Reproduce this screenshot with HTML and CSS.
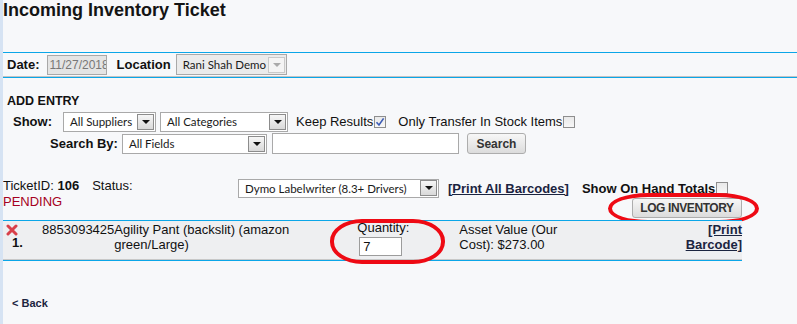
FILE: index.html
```html
<!DOCTYPE html>
<html>
   <head>
      <title>Incoming Inventory Ticket</title>
      <link rel="stylesheet" href="styles.css">
   </head>
   <body>
      <div class="page">
         <h1>Incoming Inventory Ticket</h1>
         <div class="ticket-head">
            <span class="field-label">Date:</span>
            <span class="date-input">11/27/2018</span>
            <span class="field-label location-label">Location</span>
            <div class="dropdown dropdown-location is-disabled">
               <span class="dropdown-text">Rani Shah Demo</span>
               <span class="dropdown-arrow"></span>
            </div>
         </div>
         <div class="add-entry">
            <div class="section-title">ADD ENTRY</div>
            <div class="filter-row show-row">
               <span class="field-label">Show:</span>
               <div class="dropdown dropdown-suppliers">
                  <span class="dropdown-text">All Suppliers</span>
                  <span class="dropdown-arrow"></span>
               </div>
               <div class="dropdown dropdown-categories">
                  <span class="dropdown-text">All Categories</span>
                  <span class="dropdown-arrow"></span>
               </div>
               <span class="check-label keep-label">Keep Results</span>
               <span class="checkbox checked">
                  <svg width="10" height="10" viewBox="0 0 10 10"><path d="M1.5 5.2 L4 8 L8.6 1.4" fill="none" stroke="#3b5bb5" stroke-width="1.6"/></svg>
               </span>
               <span class="check-label transfer-label">Only Transfer In Stock Items</span>
               <span class="checkbox"></span>
            </div>
            <div class="filter-row search-row">
               <span class="field-label">Search By:</span>
               <div class="dropdown dropdown-fields">
                  <span class="dropdown-text">All Fields</span>
                  <span class="dropdown-arrow"></span>
               </div>
               <span class="text-input"></span>
               <button class="btn search-btn">Search</button>
            </div>
         </div>
         <div class="ticket-bar">
            <div class="ticket-info">TicketID: <b>106</b><span class="status-label">Status:</span> <span class="pending">PENDING</span></div>
            <div class="ticket-actions">
               <div class="actions-top">
                  <div class="dropdown dropdown-printer">
                     <span class="dropdown-text">Dymo Labelwriter (8.3+ Drivers)</span>
                     <span class="dropdown-arrow"></span>
                  </div>
                  <a class="print-all" href="#">[Print All Barcodes]</a>
                  <span class="field-label hand-label">Show On Hand Totals</span>
                  <span class="checkbox"></span>
               </div>
               <div class="actions-bottom">
                  <span class="marked">
                     <button class="btn log-btn">LOG INVENTORY</button>
                     <span class="ring ring-log"></span>
                  </span>
               </div>
            </div>
         </div>
         <div class="item-row">
            <div class="item-num">
               <svg class="remove-icon" width="12" height="12" viewBox="0 0 12 12"><path d="M2 2 L10 10 M10 2 L2 10" stroke="#d8404a" stroke-width="3" stroke-linecap="round"/></svg>
               <div class="num">1.</div>
            </div>
            <div class="item-code">8853093425</div>
            <div class="item-name">Agility Pant (backslit) (amazon green/Large)</div>
            <div class="item-qty">
               <div>Quantity:</div>
               <span class="qty-input">7</span>
            </div>
            <div class="item-value">Asset Value (Our Cost): $273.00</div>
            <div class="item-print"><a href="#">[Print Barcode]</a></div>
            <span class="ring ring-qty"></span>
         </div>
         <a class="back-link" href="#">&lt; Back</a>
      </div>
   </body>
</html>
```

FILE: styles.css
```css
* {
   box-sizing: border-box;
}
html, body {
   height: 100%;
}
body {
   margin: 0;
   background: #f7f8fa;
   border-left: 3px solid #d6e3f3;
   color: #111;
   font-family: "Liberation Sans", Arial, sans-serif;
   font-size: 13px;
}
.page {
   width: 794px;
}
h1 {
   margin: 0 0 31px;
   font-size: 18px;
   line-height: 21px;
   font-weight: bold;
   color: #141414;
}
.field-label {
   font-weight: bold;
   white-space: nowrap;
}

/* ticket header */
.ticket-head {
   display: flex;
   align-items: center;
   height: 25px;
   padding-left: 4px;
   border-top: 1px solid #0ba6e8;
   border-bottom: 1px solid #c3c3c3;
   box-shadow: 0 1px 0 #0ba6e8;
}
.date-input {
   width: 60px;
   height: 20px;
   margin-left: 7px;
   padding: 2px 0 0 2px;
   border: 1px solid #a8a8a8;
   background: #e4e4e4;
   color: #777;
   font-size: 12px;
   overflow: hidden;
   white-space: nowrap;
}
.location-label {
   margin-left: 10px;
}

/* dropdowns */
.dropdown {
   display: flex;
   align-items: center;
   height: 20px;
   border: 1px solid #a9a9a9;
   background: #fff;
   font-family: Lato, "Open Sans", sans-serif;
   font-size: 11.5px;
   color: #1a1a1a;
}
.dropdown-text {
   flex: 1;
   min-width: 0;
   padding-left: 6px;
   white-space: nowrap;
   overflow: hidden;
}
.dropdown-arrow {
   position: relative;
   flex: none;
   width: 17px;
   height: 16px;
   margin-right: 1px;
   border: 1px solid #8c8c8c;
   background: linear-gradient(#f6f6f6, #d9d9d9);
}
.dropdown-arrow::after {
   content: "";
   position: absolute;
   left: 4px;
   top: 5px;
   border-left: 4px solid transparent;
   border-right: 4px solid transparent;
   border-top: 4px solid #111;
}
.dropdown.is-disabled {
   background: #ebebeb;
}
.dropdown.is-disabled .dropdown-arrow {
   border-color: #c9c9c9;
   background: #f4f4f4;
}
.dropdown.is-disabled .dropdown-arrow::after {
   border-top-color: #aaa;
}
.dropdown-location {
   width: 111px;
   height: 21px;
   margin-left: 5px;
}
.dropdown-suppliers {
   width: 93px;
   margin-left: 11px;
}
.dropdown-categories {
   width: 128px;
   margin-left: 4px;
}
.dropdown-fields {
   width: 145px;
   margin-left: 4px;
}
.dropdown-printer {
   width: 201px;
   height: 19px;
}

/* add entry */
.add-entry {
   padding-top: 17px;
}
.section-title {
   padding-left: 4px;
   font-size: 12.5px;
   line-height: 14px;
   font-weight: bold;
}
.filter-row {
   display: flex;
   align-items: center;
   height: 21px;
}
.show-row {
   margin-top: 3px;
   padding-left: 10px;
}
.search-row {
   margin-top: 1px;
   padding-left: 47px;
}
.keep-label {
   margin-left: 8px;
}
.transfer-label {
   margin-left: 12px;
}
.checkbox {
   display: inline-flex;
   align-items: center;
   justify-content: center;
   width: 12px;
   height: 12px;
   margin-left: 1px;
   border: 1px solid #8e8e8e;
   background: linear-gradient(#e9e9e9, #f7f7f7);
}
.text-input {
   width: 187px;
   height: 21px;
   margin-left: 5px;
   border: 1px solid #a9a9a9;
   background: #fff;
}
.btn {
   height: 21px;
   padding: 0;
   border: 1px solid #adadad;
   border-radius: 3px;
   background: linear-gradient(#f7f7f7, #dcdcdc);
   color: #333;
   font-family: "Liberation Sans", Arial, sans-serif;
   font-size: 12px;
   font-weight: bold;
}
.search-btn {
   width: 59px;
   margin-left: 8px;
}

/* ticket bar */
.ticket-bar {
   display: flex;
   width: 739px;
   margin-top: 24px;
}
.ticket-info {
   width: 235px;
   padding-right: 100px;
   line-height: 16px;
}
.status-label {
   margin-left: 13px;
}
.pending {
   color: #a50021;
}
.ticket-actions {
   flex: 1;
}
.actions-top {
   display: flex;
   align-items: center;
   height: 20px;
}
.print-all {
   margin-left: 9px;
   color: #1b2440;
   font-weight: bold;
   white-space: nowrap;
}
.hand-label {
   margin-left: 13px;
}
.actions-bottom {
   display: flex;
   justify-content: flex-end;
}
.marked {
   position: relative;
   display: inline-block;
}
.log-btn {
   width: 110px;
   height: 20px;
   letter-spacing: -0.4px;
}
.ring {
   position: absolute;
   border: 4px solid #ee0a14;
}
.ring-log {
   left: -24px;
   top: -5px;
   width: 151px;
   height: 31px;
   border-radius: 40px / 50%;
}

/* item row */
.item-row {
   position: relative;
   display: flex;
   width: 739px;
   height: 40px;
   margin-top: 2px;
   padding-top: 1px;
   line-height: 15px;
   background: #eeeff1;
   border-top: 1px solid #0ba6e8;
   border-bottom: 1px solid #c8c8c8;
   box-shadow: 0 1px 0 #0ba6e8;
}
.item-num {
   width: 39px;
   padding: 2px 0 0 3px;
}
.remove-icon {
   display: block;
}
.num {
   padding-left: 6px;
   font-weight: bold;
   line-height: 13px;
}
.item-code {
   white-space: nowrap;
}
.item-name {
   width: 243px;
}
.item-qty {
   width: 102px;
   margin-top: -2px;
}
.qty-input {
   display: block;
   width: 43px;
   height: 19px;
   margin: 2px 0 0 2px;
   padding: 1px 0 0 3px;
   border: 1px solid #9c9c9c;
   background: #fff;
   line-height: 15px;
}
.item-value {
   width: 110px;
}
.item-print {
   flex: 1;
   text-align: right;
   padding-left: 90px;
}
.item-print a {
   color: #1b2440;
   font-weight: bold;
}
.ring-qty {
   left: 327px;
   top: -2px;
   width: 115px;
   height: 45px;
   border-radius: 32px / 22px;
}

.back-link {
   display: inline-block;
   margin: 37px 0 0 9px;
   color: #1b2440;
   font-size: 11px;
   font-weight: bold;
   text-decoration: none;
}
```
